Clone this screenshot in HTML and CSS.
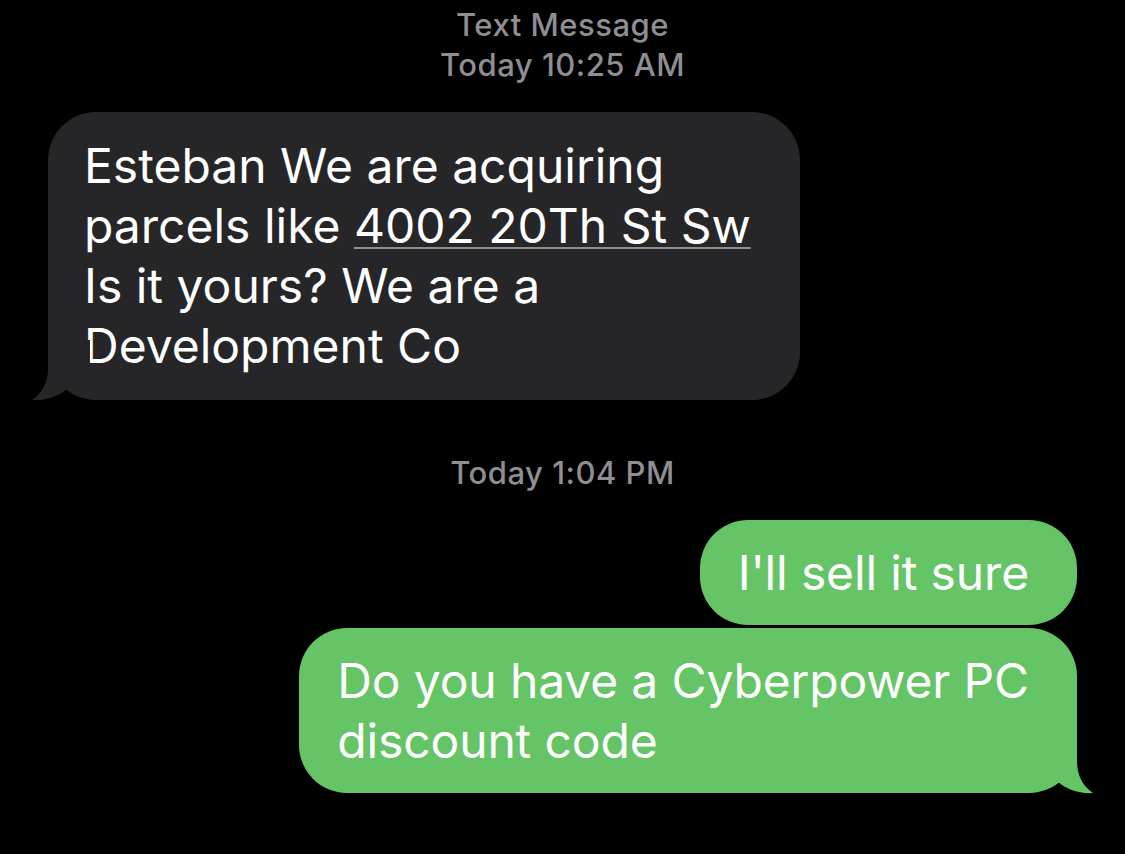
FILE: index.html
```html
<!DOCTYPE html>
<html lang="en">
<head>
<meta charset="utf-8">
<title>Text Message</title>
<link rel="stylesheet" href="styles.css">
</head>
<body>
<main class="thread">
  <header class="stamp stamp-top">
    <div class="stamp-line">Text Message</div>
    <div class="stamp-line"><span class="day">Today</span> 10:25 AM</div>
  </header>

  <div class="msg in">
    <p class="msg-text">Esteban We are acquiring<br>parcels like <span class="link">4002 20Th St Sw</span><br>Is it yours? We are a<br>Development Co</p>
    <svg class="tail" width="60" height="60" viewBox="0 0 60 60" aria-hidden="true"><path d="M16,0 L16,28 C16,44 9,54 0,60 C14,61 27,56 35,49 L58,30 L58,0 Z"/></svg>
  </div>

  <div class="stamp stamp-mid">
    <div class="stamp-line"><span class="day">Today</span> 1:04 PM</div>
  </div>

  <div class="msg out first">
    <p class="msg-text">I'll sell it sure</p>
  </div>
  <div class="msg out last">
    <p class="msg-text">Do you have a Cyberpower PC<br>discount code</p>
    <svg class="tail" width="60" height="60" viewBox="0 0 60 60" aria-hidden="true"><path d="M16,0 L16,28 C16,44 9,54 0,60 C14,61 27,56 35,49 L58,30 L58,0 Z"/></svg>
  </div>
</main>
</body>
</html>
```

FILE: styles.css
```css
html, body {
  margin: 0;
  padding: 0;
  background: #000;
}

body {
  font-family: Inter, "Noto Sans", "Liberation Sans", sans-serif;
  color: #fff;
  width: 1125px;
  height: 854px;
  overflow: hidden;
}

.thread {
  display: flex;
  flex-direction: column;
  padding: 0 48px;
}

.stamp {
  text-align: center;
  color: #8e8e93;
  font-size: 31px;
  line-height: 40px;
  font-weight: 500;
  letter-spacing: 0.5px;
}

.stamp-top {
  padding-top: 5px;
  margin-bottom: 27px;
}

.stamp-mid {
  margin-top: 53px;
  margin-bottom: 27px;
}

.day {
  font-weight: 500;
}

.msg {
  position: relative;
  border-radius: 48px;
}

.msg-text {
  margin: 0;
  font-size: 48px;
  line-height: 60px;
  font-weight: 400;
  letter-spacing: 0;
  white-space: nowrap;
}

.msg.in {
  align-self: flex-start;
  background: #262629;
  width: 752px;
  box-sizing: border-box;
  padding: 23.5px 50px 24px 36px;
}

.msg.in .tail {
  position: absolute;
  left: -16px;
  bottom: 0;
  fill: #262629;
  overflow: visible;
}

.msg.out {
  align-self: flex-end;
  background: #65c466;
  padding: 23px 48px 22px 38px;
}

.msg.out .msg-text {
  letter-spacing: -0.15px;
}

.msg.out.first {
  margin-bottom: 3px;
}

.msg.out .tail {
  position: absolute;
  right: -16px;
  bottom: 0;
  fill: #65c466;
  transform: scaleX(-1);
  overflow: visible;
}

.link {
  text-decoration: underline;
  text-decoration-color: #8e8e93;
  text-decoration-thickness: 2px;
  text-underline-offset: 4px;
}
```
